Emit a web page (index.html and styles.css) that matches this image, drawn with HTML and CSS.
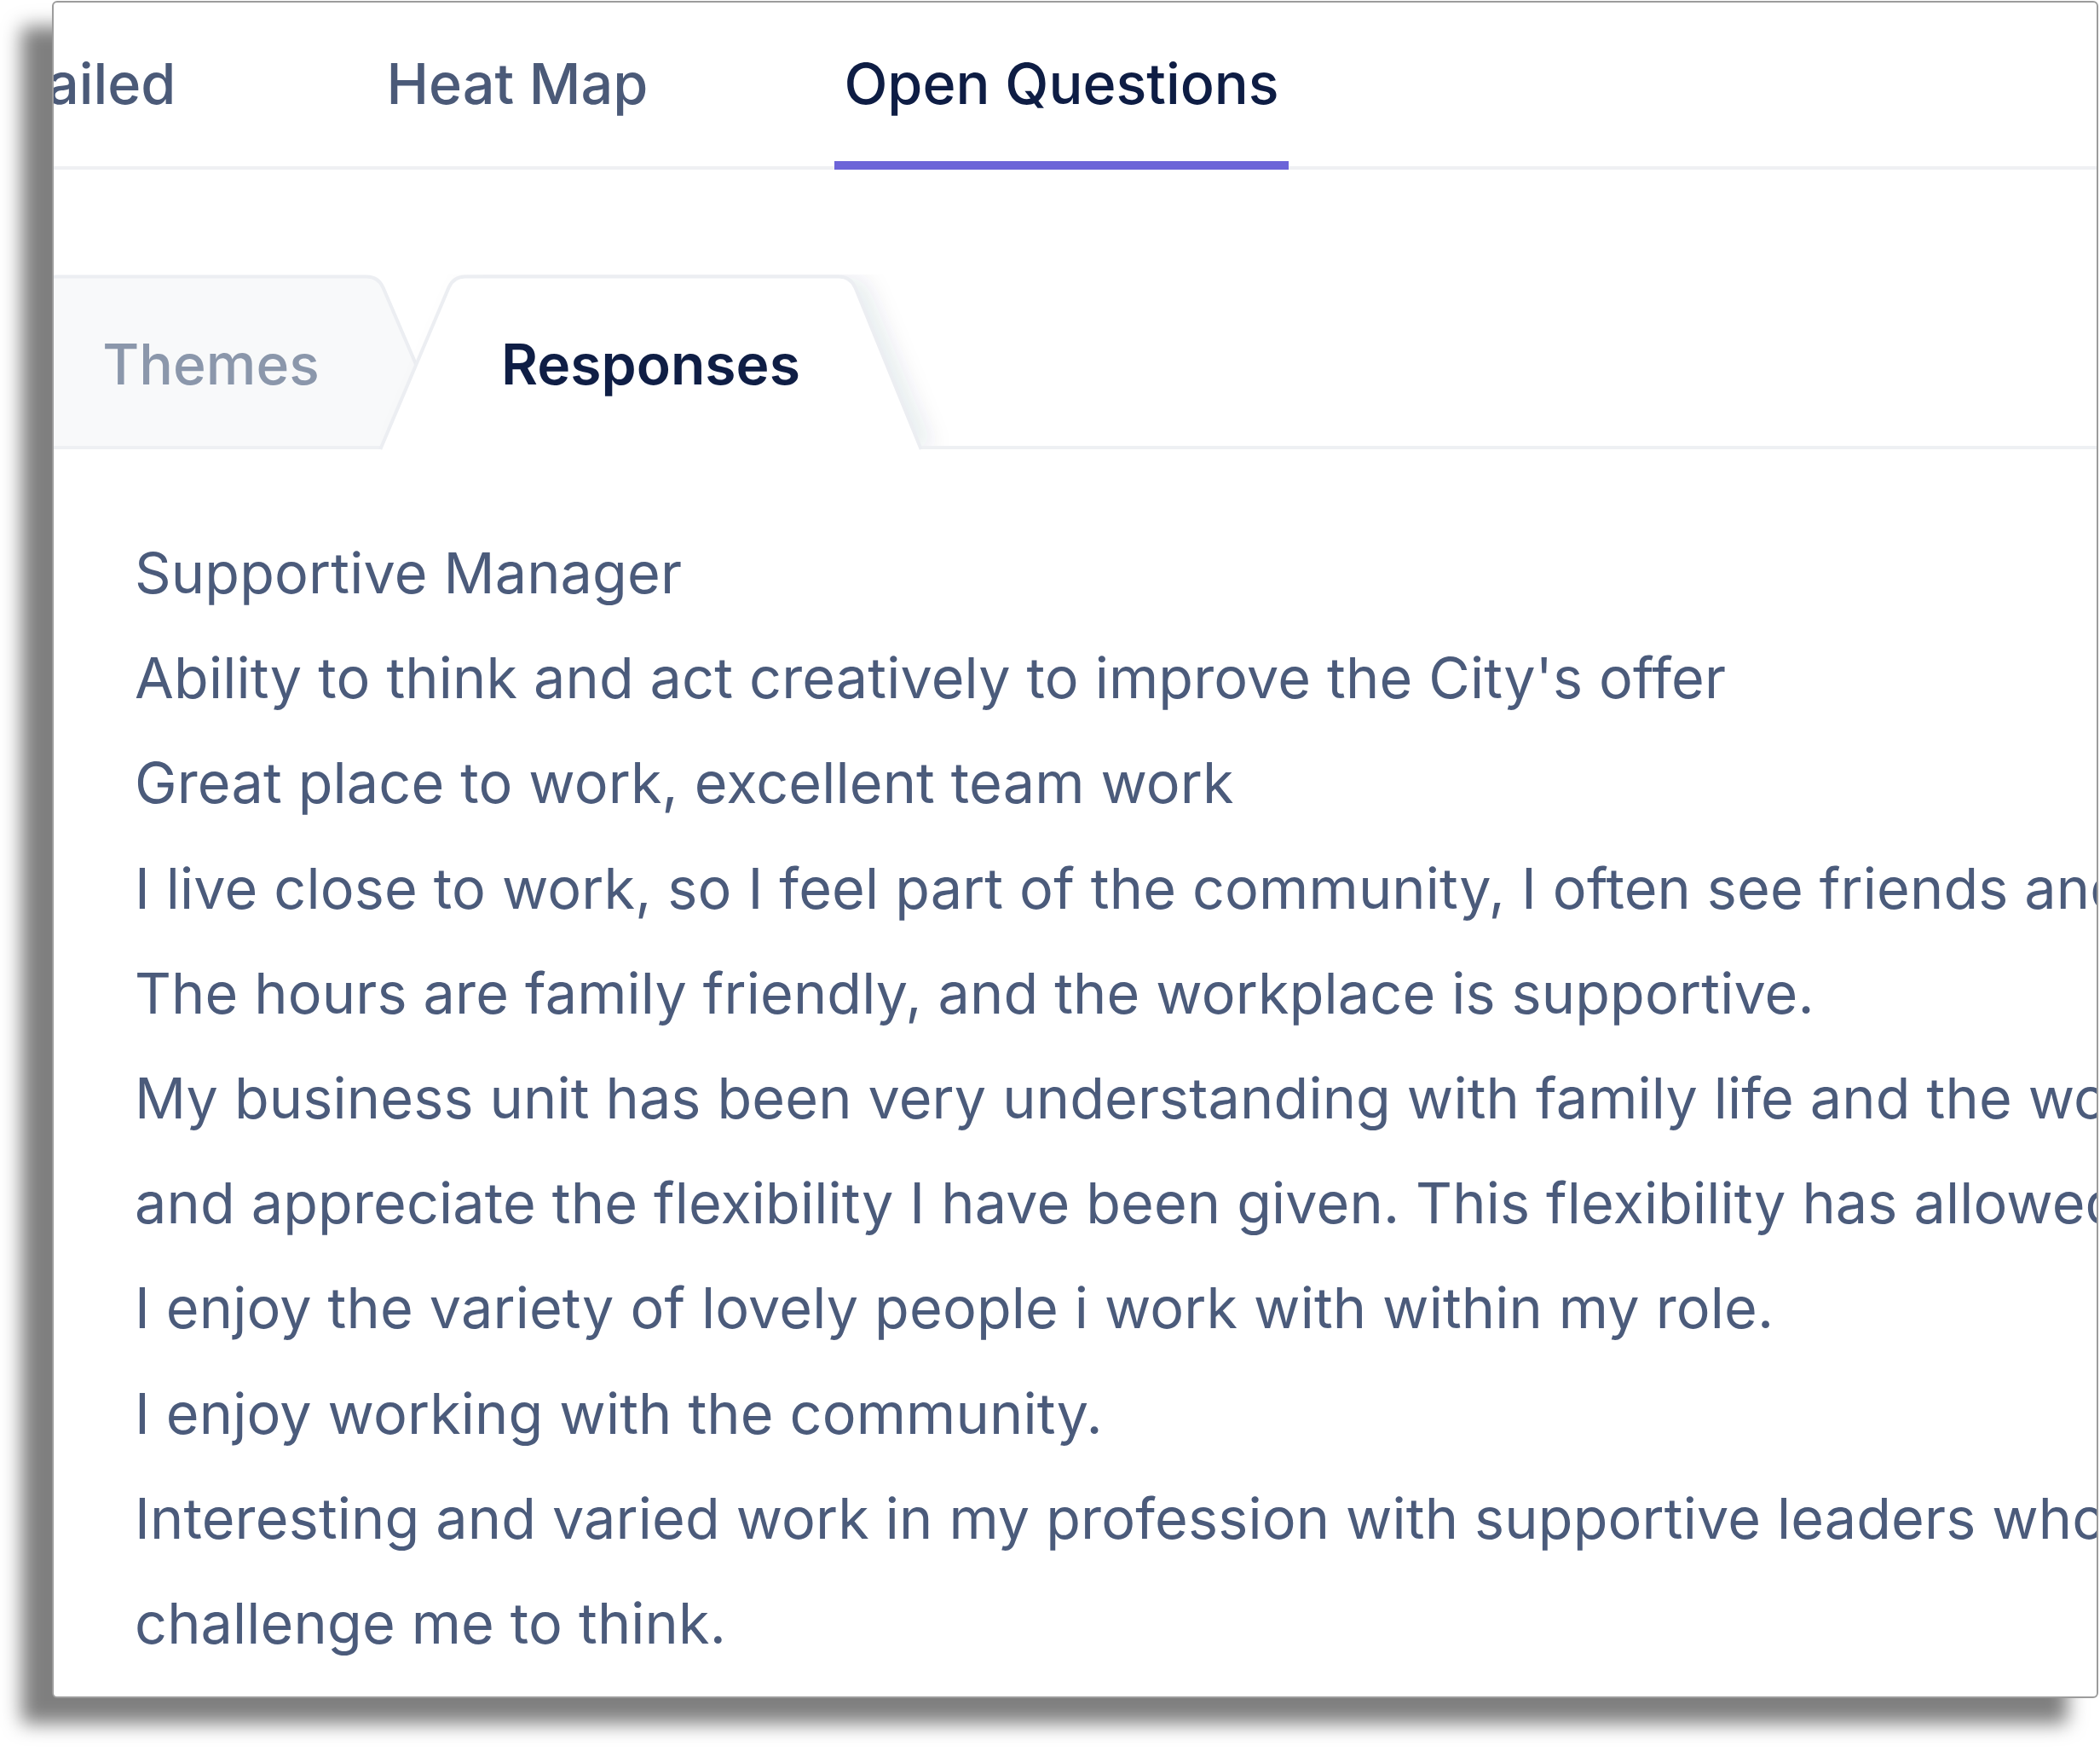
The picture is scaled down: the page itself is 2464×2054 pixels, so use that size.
FILE: index.html
```html
<!DOCTYPE html>
<html lang="en">
<head>
<meta charset="utf-8">
<title>Open Questions – Responses</title>
<link rel="stylesheet" href="styles.css">
</head>
<body>
<div class="window">
  <nav class="nav">
    <a class="nav-item nav-first">Detailed</a>
    <a class="nav-item nav-second">Heat Map</a>
    <a class="nav-item nav-third is-active">Open Questions</a>
  </nav>

  <div class="subtabs">
    <div class="subtab subtab-themes">
      <svg class="tab-shape" width="561" height="201" viewBox="0 0 561 201" aria-hidden="true">
        <path d="M0,201 L79.5,15.4 Q85,2.5 99,2.5 L463,2.5 Q477,2.5 482.5,15.4 L562,201" fill="#f8f9fa" stroke="#eceef2" stroke-width="4"/>
      </svg>
      <span class="subtab-label">Themes</span>
    </div>
    <div class="subtab subtab-responses">
      <svg class="tab-shape" width="635" height="205" viewBox="0 0 635 205" aria-hidden="true">
        <defs>
          <filter id="tabShadow" filterUnits="userSpaceOnUse" x="0" y="0" width="740" height="201">
            <feDropShadow dx="16" dy="0" stdDeviation="12" flood-color="#1e2a4a" flood-opacity="0.09"/>
          </filter>
        </defs>
        <path d="M0.3,205 L80.5,15.4 Q86,2.5 100,2.5 L538,2.5 Q552,2.5 557.5,15.4 L634.7,205" fill="#ffffff" filter="url(#tabShadow)"/>
        <path d="M0.3,205 L80.5,15.4 Q86,2.5 100,2.5 L538,2.5 Q552,2.5 557.5,15.4 L634.7,205" fill="#ffffff" stroke="#eceef2" stroke-width="4"/>
      </svg>
      <span class="subtab-label">Responses</span>
    </div>
  </div>

  <ul class="responses">
    <li>Supportive Manager</li>
    <li>Ability to think and act creatively to improve the City's offer</li>
    <li>Great place to work, excellent team work</li>
    <li>I live close to work, so I feel part of the community, I often see friends and neighbours.</li>
    <li>The hours are family friendly, and the workplace is supportive.</li>
    <li>My business unit has been very understanding with family life and the work/life balance<br>and appreciate the flexibility I have been given. This flexibility has allowed me to grow.</li>
    <li>I enjoy the variety of lovely people i work with within my role.</li>
    <li>I enjoy working with the community.</li>
    <li>Interesting and varied work in my profession with supportive leaders who<br>challenge me to think.</li>
  </ul>
</div>
</body>
</html>
```

FILE: styles.css
```css
html, body {
  margin: 0;
  padding: 0;
  background: #ffffff;
}

body {
  font-family: "Inter", "Noto Sans", "Liberation Sans", sans-serif;
  width: 2464px;
  height: 2054px;
  overflow: visible;
}

.window {
  box-sizing: border-box;
  width: 2401px;
  height: 1991px;
  margin: 1px 0 0 61px;
  border: 2px solid #9c9c9c;
  border-radius: 6px;
  background: #ffffff;
  overflow: hidden;
  box-shadow: -36px 30px 22px rgba(0, 0, 0, 0.5);
}

/* top navigation */
.nav {
  display: flex;
  height: 192px;
  border-bottom: 4px solid #eff0f3;
}

.nav-item {
  box-sizing: border-box;
  flex: none;
  height: 196px;
  padding: 54px 11px 0;
  font-size: 66.5px;
  line-height: 82px;
  font-weight: 500;
  color: #4b5a78;
  border-bottom: 10px solid transparent;
  white-space: nowrap;
  text-decoration: none;
}

.nav-first {
  margin-left: -129px;
}

.nav-second {
  margin-left: 225px;
}

.nav-third {
  margin-left: 208px;
}

.nav-item.is-active {
  color: #0e1d44;
  border-bottom-color: #6c64d8;
}

/* sub tabs */
.subtabs {
  display: flex;
  align-items: flex-start;
  height: 201px;
  margin-top: 123px;
  border-bottom: 4px solid #eef0f3;
}

.subtab {
  position: relative;
  flex: none;
  box-sizing: border-box;
  height: 201px;
  display: flex;
  align-items: center;
  justify-content: center;
  padding-top: 8px;
  font-size: 66px;
}

.tab-shape {
  position: absolute;
  left: 0;
  top: 0;
  overflow: visible;
}

.subtab-label {
  position: relative;
  line-height: 80px;
}

.subtab-themes {
  width: 561px;
  margin-left: -96px;
  color: #8b97ab;
  font-weight: 500;
}

.subtab-responses {
  width: 635px;
  height: 205px;
  padding-top: 4px;
  margin-left: -82px;
  color: #0f1e45;
  font-weight: 600;
}

/* responses list */
.responses {
  list-style: none;
  margin: 0;
  padding: 84px 0 0 95px;
  font-size: 66.5px;
  line-height: 123.2px;
  letter-spacing: 0.15px;
  color: #4b5b7b;
  white-space: nowrap;
}

.responses li {
  margin: 0;
}
```
